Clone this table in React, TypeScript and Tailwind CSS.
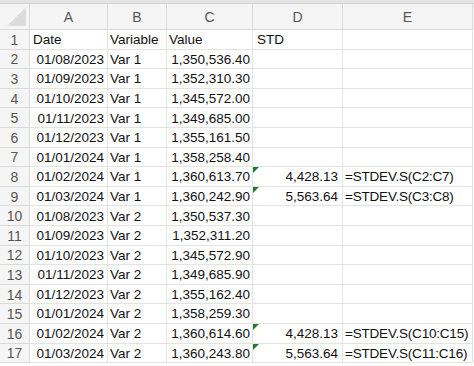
import React from "react";

type Row = [string, string, string, string, string];

const rows: Row[] = [
  ["Date", "Variable", "Value", "STD", ""],
  ["01/08/2023", "Var 1", "1,350,536.40", "", ""],
  ["01/09/2023", "Var 1", "1,352,310.30", "", ""],
  ["01/10/2023", "Var 1", "1,345,572.00", "", ""],
  ["01/11/2023", "Var 1", "1,349,685.00", "", ""],
  ["01/12/2023", "Var 1", "1,355,161.50", "", ""],
  ["01/01/2024", "Var 1", "1,358,258.40", "", ""],
  ["01/02/2024", "Var 1", "1,360,613.70", "4,428.13", "=STDEV.S(C2:C7)"],
  ["01/03/2024", "Var 1", "1,360,242.90", "5,563.64", "=STDEV.S(C3:C8)"],
  ["01/08/2023", "Var 2", "1,350,537.30", "", ""],
  ["01/09/2023", "Var 2", "1,352,311.20", "", ""],
  ["01/10/2023", "Var 2", "1,345,572.90", "", ""],
  ["01/11/2023", "Var 2", "1,349,685.90", "", ""],
  ["01/12/2023", "Var 2", "1,355,162.40", "", ""],
  ["01/01/2024", "Var 2", "1,358,259.30", "", ""],
  ["01/02/2024", "Var 2", "1,360,614.60", "4,428.13", "=STDEV.S(C10:C15)"],
  ["01/03/2024", "Var 2", "1,360,243.80", "5,563.64", "=STDEV.S(C11:C16)"],
];

const Tri = () => (
  <svg className="absolute left-0 top-0" width="6" height="6" viewBox="0 0 6 6">
    <polygon points="0,0 6,0 0,6" fill="#1f7a2e" />
  </svg>
);

export default function App() {
  return (
    <div
      className="w-[474px] h-[366px] bg-white overflow-hidden text-[13.5px] text-[#111]"
      style={{ fontFamily: '"Liberation Sans", Arial, sans-serif' }}
    >
      <div className="h-[4px] bg-[#e4e4e4] border-b border-[#d4d4d4]" />
      {/* header */}
      <div className="flex h-[26px] bg-[#f5f5f5] text-[#555] text-[14px]">
        <div className="w-[30px] border-r border-b border-[#dadada] relative">
          <svg className="absolute left-[7px] top-[3px]" width="19" height="19" viewBox="0 0 19 19">
            <polygon points="19,0 19,19 0,19" fill="#dcdcdc" />
          </svg>
        </div>
        {[
          ["A", "w-[78px]"],
          ["B", "w-[59px]"],
          ["C", "w-[86px]"],
          ["D", "w-[90px]"],
          ["E", "w-[130px]"],
        ].map(([l, w]) => (
          <div key={l} className={`${w} flex items-center justify-center pt-[2px] border-r border-b border-[#dadada]`}>
            {l}
          </div>
        ))}
      </div>
      {rows.map((r, i) => {
        const n = i + 1;
        const header = n === 1;
        return (
          <div key={n} className="flex h-[19.6px]">
            <div className="w-[30px] bg-[#f5f5f5] text-[#555] text-[14px] flex items-center justify-center pt-[2px] border-r border-b border-[#dadada]">
              {n}
            </div>
            <div className={`w-[78px] flex items-center pt-[2px] border-r border-b border-[#e3e3e3] px-[3px] ${header ? "justify-start" : "justify-end"}`}>
              {r[0]}
            </div>
            <div className="w-[59px] flex items-center pt-[2px] border-r border-b border-[#e3e3e3] px-[2px] whitespace-nowrap">{r[1]}</div>
            <div className={`w-[86px] flex items-center pt-[2px] border-r border-b border-[#e3e3e3] px-[2px] ${header ? "justify-start" : "justify-end"}`}>
              {r[2]}
            </div>
            <div className={`relative w-[90px] flex items-center pt-[2px] border-r border-b border-[#e3e3e3] px-[4px] ${header ? "justify-start" : "justify-end"}`}>
              {!header && r[3] && <Tri />}
              {r[3]}
            </div>
            <div className="w-[130px] flex items-center pt-[2px] border-r border-b border-[#e3e3e3] px-[2px] whitespace-nowrap tracking-[-0.2px]">{r[4]}</div>
          </div>
        );
      })}
    </div>
  );
}
